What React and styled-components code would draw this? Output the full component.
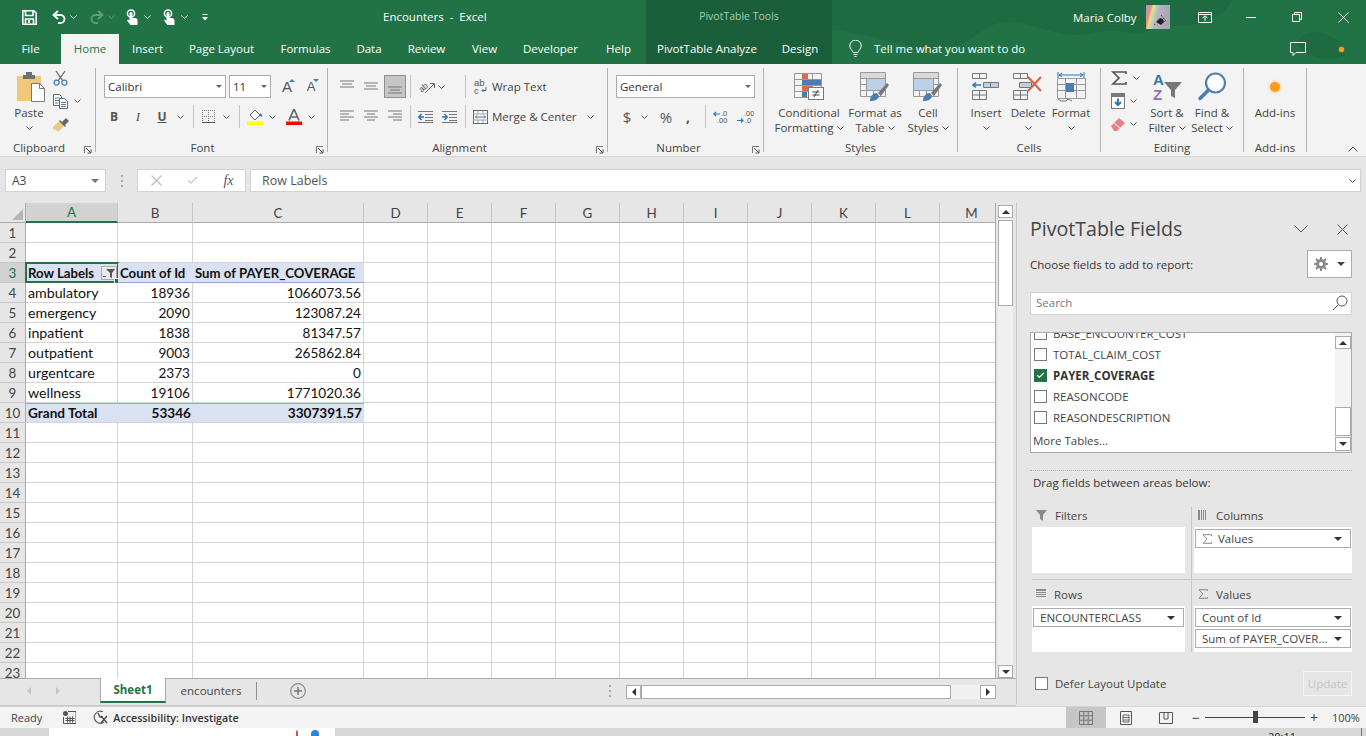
import React from 'react';
import styled, {createGlobalStyle} from 'styled-components';
import {Check} from 'lucide-react';

const uiFont = '"Open Sans", "Noto Sans", sans-serif';
const cellFont = 'Lato, "Liberation Sans", sans-serif';

const GlobalStyle = createGlobalStyle`
	html, body {
		margin: 0;
		padding: 0;
		background: #e6e6e6;
	}
	* {
		box-sizing: border-box;
	}
`;

const Page = styled.div`
	display: flex;
	flex-direction: column;
	width: 1366px;
	height: 736px;
	overflow: hidden;
	font-family: ${uiFont};
	font-size: 11.5px;
	color: #444;
	background: #e6e6e6;
`;

/* title bar and tabs */
const Header = styled.header`
	position: relative;
	flex: none;
	height: 64px;
	background: #217346;
	color: #fff;
`;

const HeaderArt = styled.svg`
	position: absolute;
	top: 0;
	left: 832px;
`;

const TitleRow = styled.div`
	position: relative;
	display: flex;
	height: 34px;
`;

const Qat = styled.div`
	display: flex;
	align-items: center;
	width: 383px;
	padding-left: 22px;
`;

const DocTitle = styled.div`
	width: 263px;
	line-height: 34px;
	white-space: pre;
`;

const ContextTitle = styled.div`
	width: 186px;
	background: #1b5e3a;
	color: #a3cdb5;
	font-size: 10.5px;
	line-height: 32px;
	text-align: center;
`;

const UserArea = styled.div`
	display: flex;
	flex: 1;
	align-items: center;
	padding-left: 241px;
`;

const Avatar = styled.svg`
	margin-left: 9px;
`;

const WindowButton = styled.div`
	display: flex;
	flex: none;
	align-items: center;
	justify-content: center;
	width: ${p => p.$w}px;
	margin-left: ${p => p.$ml || 0}px;
`;

const TabRow = styled.nav`
	position: relative;
	display: flex;
	height: 30px;
`;

const Tab = styled.div`
	display: flex;
	align-items: center;
	justify-content: center;
	width: ${p => p.$w}px;
	padding-bottom: 2px;
	background: ${p => (p.$active ? '#f3f3f3' : 'transparent')};
	color: ${p => (p.$active ? '#217346' : '#fff')};
	white-space: nowrap;
`;

const ContextTabs = styled.div`
	display: flex;
	width: 186px;
	background: #1b5e3a;
`;

const TellMe = styled.div`
	display: flex;
	align-items: center;
	gap: 12px;
	padding-bottom: 2px;
	padding-left: 17px;
`;

const Comment = styled.div`
	display: flex;
	align-items: center;
	gap: 33px;
	margin-left: 265px;
`;

const Dot = styled.span`
	display: block;
	width: ${p => p.$s}px;
	height: ${p => p.$s}px;
	border-radius: 50%;
	background: #ff9c1a;
	box-shadow: 0 0 ${p => p.$s / 3}px #ffb45c;
`;

/* ribbon */
const Ribbon = styled.section`
	position: relative;
	display: flex;
	flex: none;
	height: 92px;
	padding-top: 4px;
	background: #f3f3f3;
`;

const Group = styled.div`
	position: relative;
	display: flex;
	flex: none;
	flex-direction: column;
	width: ${p => p.$w}px;
	height: 84px;
	border-right: 1px solid #b1b1b1;
`;

const GroupBody = styled.div`
	display: flex;
	flex: none;
	height: 73px;
	padding-left: ${p => p.$pl || 0}px;
`;

const RowStack = styled.div`
	display: flex;
	flex-direction: column;
	gap: 7px;
	padding-top: 7px;
	padding-left: ${p => p.$pl || 0}px;
`;

const ToolRow = styled.div`
	display: flex;
	align-items: center;
	height: 23px;
`;

const GroupLabel = styled.div`
	flex: none;
	height: 14px;
	padding-right: ${p => p.$pr || 0}px;
	line-height: 14px;
	text-align: center;
	white-space: nowrap;
`;

const Launcher = styled.svg`
	position: absolute;
	right: 3px;
	bottom: -2px;
`;

const Slot = styled.div`
	position: relative;
	display: flex;
	flex: none;
	align-items: center;
	justify-content: center;
	width: ${p => p.$w}px;
	height: ${p => p.$h || 23}px;
	margin-left: ${p => p.$ml || 0}px;
	font-family: ${p => (p.$serif ? '"Liberation Serif", serif' : 'inherit')};
	font-size: ${p => p.$fs || 11.5}px;
	font-weight: ${p => (p.$bold ? 700 : 400)};
	font-style: ${p => (p.$italic ? 'italic' : 'normal')};
	text-decoration: ${p => (p.$underline ? 'underline' : 'none')};
	color: #555;
`;

const PressedSlot = styled(Slot)`
	border: 1px solid #8f8f8f;
	background: #c6c6c6;
`;

const GrowLetter = styled.span`
	font-family: "Liberation Sans", sans-serif;
	font-size: ${p => p.$fs}px;
	line-height: 16px;
	color: #555;
`;

const GrowCaret = styled.svg`
	position: absolute;
	top: 4px;
	right: 0;
`;

const VSep = styled.span`
	flex: none;
	width: 1px;
	height: 23px;
	margin-left: ${p => p.$ml}px;
	background: #c6c6c6;
`;

const Select = styled.div`
	display: flex;
	flex: none;
	align-items: center;
	justify-content: space-between;
	width: ${p => p.$w}px;
	height: 23px;
	margin-left: ${p => p.$ml || 0}px;
	padding: 0 3px 0 3px;
	border: 1px solid #ababab;
	background: #fff;
	color: #333;
`;

const ToolText = styled.span`
	flex: none;
	width: ${p => (p.$w ? `${p.$w}px` : 'auto')};
	margin-left: ${p => p.$ml || 0}px;
	white-space: nowrap;
`;

const LargeButton = styled.div`
	display: flex;
	flex: none;
	flex-direction: column;
	align-items: center;
	width: ${p => p.$w}px;
	line-height: 15px;
	white-space: nowrap;
`;

const LargeIcon = styled.div`
	display: flex;
	flex: none;
	align-items: center;
	justify-content: center;
	height: 37px;
	padding-left: ${p => p.$pl || 0}px;
`;

const LargeLine = styled.div`
	display: flex;
	align-items: center;
	justify-content: center;
	gap: 3px;
	height: 15px;
`;

const SmallStack = styled.div`
	display: flex;
	flex: none;
	flex-direction: column;
	gap: 7px;
	width: ${p => p.$w}px;
	padding-top: 2px;
	padding-left: ${p => p.$pl || 0}px;
`;

const SmallRow = styled.div`
	display: flex;
	align-items: center;
	gap: ${p => p.$gap || 5}px;
	height: 16px;
`;

const CollapseRibbon = styled.svg`
	position: absolute;
	right: 8px;
	bottom: 4px;
`;

/* formula bar */
const FormulaArea = styled.section`
	display: flex;
	flex: none;
	height: 47px;
	padding: 12px 5px 11px;
	border-top: 1px solid #d4d4d4;
`;

const NameBox = styled.div`
	display: flex;
	align-items: center;
	justify-content: space-between;
	width: 101px;
	padding: 0 6px;
	border: 1px solid #d2d2d2;
	background: #fff;
	font-size: 12px;
`;

const FormulaGrip = styled.div`
	display: flex;
	align-items: center;
	justify-content: center;
	width: 31px;
`;

const FxBox = styled.div`
	display: flex;
	align-items: center;
	width: 109px;
	border: 1px solid #d2d2d2;
	background: #fff;
`;

const FormulaInput = styled.div`
	display: flex;
	flex: 1;
	align-items: center;
	justify-content: space-between;
	margin-left: 4px;
	padding: 0 4px 0 11px;
	border: 1px solid #d2d2d2;
	background: #fff;
	font-size: 12.5px;
	color: #555;
`;

/* sheet */
const Main = styled.main`
	display: flex;
	flex: none;
	height: 503px;
`;

const SheetColumn = styled.div`
	display: flex;
	flex: none;
	flex-direction: column;
	width: 1016px;
`;

const SheetArea = styled.div`
	display: flex;
	flex: none;
	height: 475px;
`;

const Grid = styled.div`
	flex: none;
	width: 996px;
	height: 475px;
	overflow: hidden;
	border-right: 1px solid #ababab;
	background: #fff;
	font-family: ${cellFont};
	font-size: 13.4px;
	color: #111;
`;

const GridRow = styled.div`
	display: grid;
	grid-template-columns: 26px 92px 75px 171px repeat(9, 64px) 64px;
	height: ${p => p.$h}px;
`;

const ColHead = styled.div`
	display: flex;
	align-items: center;
	justify-content: center;
	border-right: 1px solid #c6c6c6;
	border-bottom: ${p => (p.$active ? '2px solid #217346' : '1px solid #ababab')};
	background: ${p => (p.$active ? '#d2d2d2' : '#e6e6e6')};
	color: ${p => (p.$active ? '#217346' : '#444')};
`;

const Corner = styled.div`
	display: flex;
	align-items: flex-end;
	justify-content: flex-end;
	padding: 0 2px 2px 0;
	border-right: 1px solid #ababab;
	border-bottom: 1px solid #ababab;
	background: #e6e6e6;
`;

const RowHead = styled.div`
	display: flex;
	align-items: center;
	justify-content: center;
	border-right: 1px solid #ababab;
	border-bottom: 1px solid #c6c6c6;
	background: ${p => (p.$active ? '#d2d2d2' : '#e6e6e6')};
	color: ${p => (p.$active ? '#217346' : '#444')};
`;

const cellSize = p => {
	if (p.$head) return 13.2;
	if (p.$pivot || p.$right) return 13.6;
	return 14.2;
};

const Cell = styled.div`
	position: relative;
	display: flex;
	align-items: center;
	justify-content: ${p => (p.$right ? 'flex-end' : 'flex-start')};
	padding: 0 2px 0 2px;
	border-right: ${p => (p.$pivot ? 'none' : '1px solid #d4d4d4')};
	border-top: ${p => (p.$total ? '1px solid #8ea9db' : 'none')};
	border-bottom: ${p => (p.$head ? '1px solid #8ea9db' : '1px solid #d4d4d4')};
	background: ${p => (p.$pivot ? '#d9e1f2' : '#fff')};
	font-weight: ${p => (p.$pivot ? 700 : 400)};
	font-size: ${cellSize}px;
	white-space: nowrap;
`;

const Selection = styled.div`
	position: absolute;
	top: -1px;
	right: -1px;
	bottom: -1px;
	left: -1px;
	border: 2px solid #217346;
`;

const FillHandle = styled.div`
	position: absolute;
	right: -3px;
	bottom: -3px;
	width: 5px;
	height: 5px;
	background: #217346;
	outline: 1px solid #fff;
`;

const FilterButton = styled.div`
	position: absolute;
	top: 3px;
	right: 1px;
	display: flex;
	align-items: center;
	justify-content: center;
	width: 16px;
	height: 14px;
	border: 1px solid #ababab;
	background: #e9e9e9;
`;

const VScroll = styled.div`
	display: flex;
	flex: 1;
	flex-direction: column;
	padding: 2px 3px 0 2px;
`;

const ScrollTrack = styled.div`
	display: flex;
	flex: 1;
	flex-direction: column;
	align-items: stretch;
	background: #f0f0f0;
`;

const ScrollButton = styled.div`
	display: flex;
	flex: none;
	align-items: center;
	justify-content: center;
	width: ${p => (p.$w ? `${p.$w}px` : 'auto')};
	height: ${p => p.$h || 13}px;
	border: 1px solid #ababab;
	background: #fff;
`;

const ScrollThumb = styled.div`
	flex: none;
	width: ${p => (p.$w ? `${p.$w}px` : 'auto')};
	height: ${p => (p.$h ? `${p.$h}px` : 'auto')};
	margin: ${p => p.$m || 0};
	border: 1px solid #ababab;
	background: #fff;
`;

const ScrollGap = styled.div`
	flex: 1;
`;

const SheetTabs = styled.div`
	display: flex;
	flex: none;
	height: 28px;
	border-top: 1px solid #ababab;
	border-bottom: 1px solid #c6c6c6;
`;

const TabNav = styled.div`
	display: flex;
	flex: none;
	align-items: center;
	gap: 21px;
	width: 100px;
	height: 24px;
	padding-left: 25px;
`;

const SheetTab = styled.div`
	display: flex;
	flex: none;
	align-items: center;
	justify-content: center;
	width: ${p => p.$w}px;
	height: 25px;
	margin-top: -1px;
	border-right: ${p => (p.$active ? '1px solid #ababab' : 'none')};
	border-left: ${p => (p.$active ? '1px solid #ababab' : 'none')};
	border-bottom: ${p => (p.$active ? '2px solid #217346' : 'none')};
	background: ${p => (p.$active ? '#fff' : 'transparent')};
	color: ${p => (p.$active ? '#217346' : '#444')};
	font-weight: ${p => (p.$active ? 700 : 400)};
`;

const TabDivider = styled.span`
	flex: none;
	width: 1px;
	height: 18px;
	margin-top: 3px;
	background: #8f8f8f;
`;

const AddSheet = styled.div`
	display: flex;
	flex: none;
	align-items: center;
	width: 46px;
	height: 24px;
	margin-left: 33px;
`;

const TabGrip = styled.div`
	display: flex;
	flex: none;
	align-items: center;
	width: 17px;
	height: 24px;
	margin-left: 273px;
`;

const HScroll = styled.div`
	display: flex;
	flex: none;
	width: 370px;
	height: 14px;
	margin-top: 6px;
	background: #f0f0f0;
`;

/* field list panel */
const Panel = styled.aside`
	display: flex;
	flex: 1;
	flex-direction: column;
	margin-bottom: 2px;
	padding: 0 15px 0 13px;
	border-left: 1px solid #c6c6c6;
`;

const PanelHead = styled.div`
	display: flex;
	align-items: center;
	height: 24px;
	margin-top: 14px;
`;

const PanelTitle = styled.div`
	width: 264px;
	font-size: 19.6px;
	line-height: 24px;
	color: #444;
	white-space: nowrap;
`;

const ChooseRow = styled.div`
	display: flex;
	align-items: center;
	justify-content: space-between;
	height: 28px;
	margin-top: 9px;
	color: #333;
`;

const GearButton = styled.div`
	display: flex;
	align-items: center;
	justify-content: center;
	gap: 9px;
	width: 45px;
	height: 28px;
	border: 1px solid #ababab;
	background: #fff;
`;

const SearchBox = styled.div`
	display: flex;
	align-items: center;
	justify-content: space-between;
	height: 23px;
	margin-top: 14px;
	padding: 0 3px 2px 5px;
	border: 1px solid #d2d2d2;
	background: #fff;
	color: #777;
`;

const FieldList = styled.div`
	display: flex;
	flex: none;
	height: 121px;
	margin-top: 17px;
	overflow: hidden;
	border: 1px solid #ababab;
	background: #fff;
`;

const FieldItems = styled.div`
	flex: 1;
	margin-top: -10px;
	padding-left: 3px;
	color: #444;
`;

const FieldRow = styled.div`
	display: flex;
	align-items: center;
	gap: 6px;
	height: 21px;
	font-weight: ${p => (p.$on ? 700 : 400)};
	color: ${p => (p.$on ? '#333' : '#444')};
`;

const Checkbox = styled.span`
	display: flex;
	flex: none;
	align-items: center;
	justify-content: center;
	width: 13px;
	height: 13px;
	border: 1px solid ${p => (p.$on ? '#217346' : '#777')};
	background: ${p => (p.$on ? '#217346' : '#fff')};
`;

const MoreTables = styled.div`
	height: 18px;
	margin-top: 4px;
	margin-left: -1px;
	line-height: 18px;
`;

const ListScroll = styled.div`
	display: flex;
	flex: none;
	flex-direction: column;
	width: 16px;
	padding: 3px 0 1px;
	background: #f3f3f3;
`;

const DottedLine = styled.div`
	height: 1px;
	margin-top: 17px;
	border-top: 1px dotted #b1b1b1;
`;

const DragHint = styled.div`
	margin: 5px 0 0 3px;
	line-height: 14px;
	color: #333;
`;

const Areas = styled.div`
	display: grid;
	grid-template-columns: 160px 160px;
	margin: 17px 0 0 2px;
`;

const Area = styled.div`
	display: flex;
	flex-direction: column;
	height: ${p => (p.$top ? 73 : 72)}px;
	padding-top: ${p => (p.$top ? 0 : 6)}px;
	padding-left: ${p => (p.$right ? 2 : 0)}px;
	padding-right: ${p => (p.$right ? 0 : 6)}px;
	border-right: ${p => (p.$right ? 'none' : '1px solid #c6c6c6')};
	border-bottom: ${p => (p.$top ? '1px solid #c6c6c6' : 'none')};
`;

const AreaHead = styled.div`
	display: flex;
	flex: none;
	align-items: center;
	gap: 8px;
	height: 17px;
	padding-left: 4px;
	padding-bottom: 1px;
	color: #444;
`;

const DropBox = styled.div`
	display: flex;
	flex: none;
	flex-direction: column;
	gap: 2px;
	height: 46px;
	margin-top: 3px;
	padding: 2px 1px;
	background: #fff;
`;

const AreaItem = styled.div`
	display: flex;
	flex: none;
	align-items: center;
	justify-content: space-between;
	height: 19px;
	padding: 0 8px 0 6px;
	border: 1px solid #ababab;
	background: #fff;
	white-space: nowrap;
`;

const ItemLabel = styled.span`
	display: flex;
	align-items: center;
	gap: 6px;
	color: #444;
`;

const DeferRow = styled.div`
	display: flex;
	align-items: center;
	gap: 7px;
	height: 25px;
	margin-top: 19px;
	padding-left: 5px;
`;

const UpdateButton = styled.div`
	display: flex;
	align-items: center;
	justify-content: center;
	width: 49px;
	height: 25px;
	margin-left: auto;
	border: 1px solid #f6f6f6;
	color: #c3c3c3;
`;

/* status bar */
const StatusBar = styled.footer`
	display: flex;
	flex: none;
	align-items: center;
	height: 22px;
	background: #f3f3f3;
	border-top: 1px solid #d4d4d4;
`;

const StatusText = styled.span`
	flex: none;
	margin-left: ${p => p.$ml || 0}px;
	font-weight: ${p => (p.$bold ? 600 : 400)};
	font-size: ${p => p.$fs || 11}px;
	color: ${p => (p.$bold ? '#333' : '#444')};
	white-space: nowrap;
`;

const StatusRight = styled.div`
	display: flex;
	flex: none;
	align-items: center;
	width: 300px;
	height: 21px;
	margin-left: auto;
`;

const ViewButton = styled.div`
	display: flex;
	flex: none;
	align-items: center;
	justify-content: center;
	width: 40px;
	height: 21px;
	background: ${p => (p.$active ? '#c6c6c6' : 'transparent')};
`;

const ZoomMark = styled.span`
	display: block;
	flex: none;
	width: ${p => p.$w}px;
	margin-left: ${p => p.$ml}px;
	font-size: 14px;
	line-height: 14px;
	text-align: center;
	color: #444;
`;

const ZoomSlider = styled.div`
	position: relative;
	flex: none;
	width: 100px;
	height: 1px;
	margin-left: 6px;
	background: #444;
`;

const ZoomThumb = styled.span`
	position: absolute;
	top: -6px;
	left: 48px;
	width: 5px;
	height: 12px;
	background: #444;
`;

const DesktopStrip = styled.div`
	position: relative;
	display: flex;
	flex: 1;
	overflow: hidden;
	background: #d8d8d8;
`;

const BehindWindow = styled.div`
	display: flex;
	gap: 13px;
	justify-content: flex-end;
	width: 286px;
	margin-left: 49px;
	padding: 2px 16px 0 0;
	background: #fff;
`;

const BehindMark = styled.span`
	display: block;
	width: ${p => p.$w}px;
	height: 8px;
	border-radius: 50% 50% 0 0;
	background: ${p => p.$color};
`;

const BehindClock = styled.div`
	position: absolute;
	top: 2px;
	left: 1268px;
	font-size: 11px;
	line-height: 14px;
	color: #222;
`;

const BehindEdge = styled.div`
	position: absolute;
	top: 0;
	left: 1361px;
	width: 1px;
	height: 8px;
	background: #777;
`;

/* small drawings */
const Svg = ({w, h, children, ...rest}) => (
	<svg width={w} height={h} viewBox={`0 0 ${w} ${h}`} fill="none" {...rest}>
		{children}
	</svg>
);

const Chev = ({color = '#555'}) => (
	<Svg w={7} h={4}>
		<path d="M.5.5l3 3 3-3" stroke={color} />
	</Svg>
);

const Caret = ({color = '#555'}) => (
	<Svg w={8} h={4}>
		<path d="M0 0h8L4 4z" fill={color} />
	</Svg>
);

const SelectCaret = () => (
	<Svg w={6} h={3}>
		<path d="M0 0h6L3 3z" fill="#666" />
	</Svg>
);

const Arrow = ({dir = 'up', color = '#333'}) => (
	<Svg w={8} h={8}>
		<path
			d={
				{
					up: 'M0 6h8L4 2z',
					down: 'M0 2h8L4 6z',
					left: 'M6 0v8L2 4z',
					right: 'M2 0v8l4-4z',
				}[dir]
			}
			fill={color}
		/>
	</Svg>
);

const CrossIcon = ({s = 11, color = '#fff', width = 1}) => (
	<Svg w={s} h={s}>
		<path d={`M.5.5l${s - 1} ${s - 1}M${s - 0.5} .5l-${s - 1} ${s - 1}`} stroke={color} strokeWidth={width} />
	</Svg>
);

const LauncherIcon = () => (
	<Launcher width="8" height="8" viewBox="0 0 8 8" fill="none">
		<path d="M.5 7V.5H7" stroke="#777" />
		<path d="M2 2l5 5M7 3.500V7H3.500" stroke="#555" />
	</Launcher>
);

const SaveIcon = () => (
	<Svg w={15} h={15}>
		<path d="M.8.8h11l2.400 2.400v11H.8z" stroke="#fff" strokeWidth="1.600" />
		<path d="M3.500 1v4.500h7.500V1M3.500 14V9h8v5" stroke="#fff" strokeWidth="1.600" />
		<path d="M7 10v3" stroke="#fff" strokeWidth="2" />
	</Svg>
);

const UndoIcon = ({color = '#fff', flip}) => (
	<Svg w={14} h={14} style={flip ? {transform: 'scaleX(-1)'} : undefined}>
		<path d="M6 1L1.500 5 6 9" stroke={color} strokeWidth="1.800" />
		<path d="M2 5h6.500a4 4 0 010 8H6" stroke={color} strokeWidth="1.800" />
	</Svg>
);

const TouchIcon = () => (
	<Svg w={12} h={17}>
		<circle cx="5" cy="4.500" r="3.600" stroke="#fff" strokeWidth="1.500" />
		<path
			d="M3.500 4.500a1.500 1.500 0 013 0V9H9c1.600 0 2.500 1 2.500 2.300V16H4.500L1 11.500l1-1 1.500 1z"
			fill="#fff"
		/>
	</Svg>
);

const QatMore = () => (
	<Svg w={6} h={7}>
		<path d="M.5.5h5" stroke="#fff" />
		<path d="M0 3h6L3 6.500z" fill="#fff" />
	</Svg>
);

const PasteIcon = () => (
	<Svg w={28} h={30}>
		<rect x="0" y="4" width="24" height="25" rx="1" fill="#edc87e" />
		<path d="M6 3h3V0h6v3h3v4H6z" fill="#6f6f6f" />
		<path d="M14.500 11.500h8l5 5v13h-13z" fill="#fff" stroke="#777" />
		<path d="M22.500 11.500v5h5" stroke="#777" />
	</Svg>
);

const CutIcon = () => (
	<Svg w={15} h={16}>
		<path d="M3 1l7 10M12 1L5 11" stroke="#666" strokeWidth="1.300" />
		<circle cx="3.600" cy="12.600" r="2.500" stroke="#4a7eb3" strokeWidth="1.300" />
		<circle cx="11.400" cy="12.600" r="2.500" stroke="#4a7eb3" strokeWidth="1.300" />
	</Svg>
);

const CopyIcon = () => (
	<Svg w={15} h={15}>
		<path d="M.5.5h6l2 2v9h-8z" fill="#fff" stroke="#666" />
		<path d="M6.500 4.500h5l3 3v7h-8z" fill="#fff" stroke="#666" />
		<path d="M2 4h4M2 6.500h4M2 9h3M8 8.500h5M8 10.500h5M8 12.500h5" stroke="#4a7eb3" />
	</Svg>
);

const PainterIcon = () => (
	<Svg w={17} h={15}>
		<path d="M0 10l6-6 5 5-4 4-2 2-1-2-1 1-1-2-2 1z" fill="#edc87e" />
		<path d="M7 3l2 2 4-4 3 3-4 4 1 1-1 1-6-6z" fill="#666" />
	</Svg>
);

const GrowIcon = ({up}) => (
	<Slot $w={16} $ml={8}>
		<GrowLetter $fs={up ? 15 : 13}>A</GrowLetter>
		<GrowCaret width="6" height="3" viewBox="0 0 6 3">
			<path d={up ? 'M0 3h6L3 0z' : 'M0 0h6L3 3z'} fill="#4a7eb3" />
		</GrowCaret>
	</Slot>
);

const BorderIcon = () => (
	<Svg w={13} h={13}>
		<path
			d="M.5 0v13M6.500 0v13M12.500 0v13M0 .5h13M0 6.500h13"
			stroke="#777"
			strokeDasharray="1 1"
		/>
		<path d="M0 12.500h13" stroke="#555" />
	</Svg>
);

const FillIcon = () => (
	<Svg w={16} h={16}>
		<path d="M3 6l5-5 5 5-5 5z" fill="#fff" stroke="#666" />
		<path d="M13 4c2 1 2.500 2.500 2 4l-2-1z" fill="#4a7eb3" />
		<rect y="12.500" width="16" height="3.500" fill="#ffff00" />
	</Svg>
);

const ColorIcon = () => (
	<Svg w={16} h={16}>
		<path d="M3 11.500L8 0l5 11.500M4.800 8h6.400" stroke="#666" strokeWidth="1.700" />
		<rect y="12.500" width="16" height="3.500" fill="#ff0000" />
	</Svg>
);

const lines = {
	top: ['M0 1h14', 'M2 4h10', 'M0 7h14'],
	middle: ['M0 3h14', 'M2 6h10', 'M0 9h14'],
	bottom: ['M0 7h14', 'M2 10h10', 'M0 13h14'],
	left: ['M0 1h14', 'M0 4h9', 'M0 7h14', 'M0 10h9'],
	center: ['M0 1h14', 'M3 4h8', 'M0 7h14', 'M3 10h8'],
	right: ['M0 1h14', 'M5 4h9', 'M0 7h14', 'M5 10h9'],
};

const AlignIcon = ({kind}) => (
	<Svg w={14} h={14}>
		{lines[kind].map(d => (
			<path key={d} d={d} stroke="#777" />
		))}
	</Svg>
);

const OrientIcon = () => (
	<Svg w={17} h={15} overflow="visible">
		<text
			x="1"
			y="11"
			fontSize="8.500"
			fill="#555"
			fontFamily="Liberation Sans, sans-serif"
			transform="rotate(-40 6 9)"
		>
			ab
		</text>
		<path d="M7 14l9-9M12 4.500h4.500V9" stroke="#666" />
	</Svg>
);

const IndentIcon = ({out}) => (
	<Svg w={15} h={12}>
		<path d="M0 .5h15M7 3.500h8M7 6.500h8M7 9.500h8M0 11.500h15" stroke="#777" />
		<path
			d={out ? 'M6 6H1M3.500 3L.8 6l2.700 3' : 'M0 6h5M2.500 3l2.700 3-2.700 3'}
			stroke="#2f75b5"
			strokeWidth="1.500"
		/>
	</Svg>
);

const WrapIcon = () => (
	<Svg w={13} h={17}>
		<text x="0" y="7.500" fontSize="9.500" fill="#555" fontFamily="Liberation Sans, sans-serif">
			ab
		</text>
		<text x="0" y="16" fontSize="9.500" fill="#555" fontFamily="Liberation Sans, sans-serif">
			c
		</text>
		<path d="M12 9v3.500H8M9.500 11L8 12.500 9.500 14" stroke="#2f75b5" />
	</Svg>
);

const MergeIcon = () => (
	<Svg w={15} h={14}>
		<rect x=".5" y=".5" width="14" height="13" fill="#fff" stroke="#666" />
		<path d="M0 4h15M0 10h15" stroke="#999" />
		<path d="M5 .5v3M10 .5v3M5 10v3M10 10v3" stroke="#999" />
		<path d="M2.500 7h10M4 5.500L2.500 7 4 8.500M11 5.500L12.500 7 11 8.500" stroke="#2f75b5" />
	</Svg>
);

const DecimalIcon = ({more}) => (
	<Svg w={17} h={14}>
		<text x={more ? 8 : 7} y="6" fontSize="7.500" fill="#555" fontFamily="Liberation Sans, sans-serif">
			{more ? '.0' : '.00'}
		</text>
		<text x={more ? 4 : 8} y="13" fontSize="7.500" fill="#555" fontFamily="Liberation Sans, sans-serif">
			{more ? '.00' : '.0'}
		</text>
		<path
			d={more ? 'M1 4h6M3 2L1 4l2 2' : 'M0 10.500h6M4 8.500l2 2-2 2'}
			stroke="#2f75b5"
			strokeWidth="1.200"
		/>
	</Svg>
);

const ConditionalIcon = () => (
	<Svg w={30} h={27}>
		<path d="M.5.5h27v24H.5zM.5 6.500h27M.5 12.500h27M.5 18.500h27M8.500 0v25M18.500 0v25" stroke="#999" />
		<rect x="8" y="1" width="6" height="5" fill="#dc6a48" />
		<rect x="8" y="7" width="19" height="5" fill="#4a7eb3" />
		<rect x="8" y="13" width="10" height="5" fill="#dc6a48" />
		<rect x="8" y="19" width="5" height="5" fill="#4a7eb3" />
		<rect x="14.500" y="14.500" width="15" height="12" fill="#fff" stroke="#777" />
		<path d="M18.500 19h7M18.500 22h7M24 17l-4 7" stroke="#444" />
	</Svg>
);

const TableStyleIcon = ({wide}) => (
	<Svg w={30} h={30}>
		<path d="M.5.5h25v24H.5zM.5 6.500h25M.5 12.500h25M.5 18.500h25M6.500 0v25M13.500 0v25M20.500 0v25" stroke="#999" />
		<rect x="1" y="1" width="24" height="5" fill="#d9d9d9" />
		<rect x={wide ? 1 : 7} y="7" width={wide ? 19 : 18} height="11" fill="#bcd0e8" />
		<path d="M10 29c0-5 3-8 7-8l2 3c-1 4-4 5-9 5z" fill="#4a7eb3" />
		<path d="M18 21l9-10 2 2-8 11z" fill="#777" />
	</Svg>
);

const InsertIcon = () => (
	<Svg w={28} h={27}>
		<path d="M.5.5h14v5H.5zM7.500 0v6M.5 17.500h14v9H.5zM7.500 17v10M0 22h15" stroke="#777" />
		<path d="M11.500 9.500h15v5h-15zM18.500 9v6" stroke="#777" fill="#bcd0e8" />
		<path d="M1 12h8M4 9.500L1 12l3 2.500" stroke="#2f75b5" strokeWidth="1.500" />
	</Svg>
);

const DeleteIcon = () => (
	<Svg w={30} h={27}>
		<path d="M.5.500h14v5H.5zM7.500 0v6M.5 17.500h14v9H.5zM7.500 17v10M0 22h15" stroke="#777" />
		<path d="M6.500 9.500h12v5h-12z" stroke="#777" fill="#bcd0e8" />
		<path d="M15 4l13 14M28 4L15 18" stroke="#d9603d" strokeWidth="2" />
	</Svg>
);

const FormatIcon = () => (
	<Svg w={29} h={30}>
		<path d="M1 0v6M27 0v6M2 3h24M5 1L2 3l3 2M23 1l3 2-3 2" stroke="#2f75b5" />
		<path d="M.5 6.500h28v20H.5zM.5 12.500h28M.5 18.500h28M8.500 6v21M19.500 6v21" stroke="#999" />
		<rect x="9" y="11" width="8" height="9" fill="#4a7eb3" />
		<path d="M1 27l3 2h5l2-2 4 2" stroke="#777" />
	</Svg>
);

const SigmaIcon = () => (
	<Svg w={16} h={14}>
		<path d="M15 3V1H2l6 6-6 6h13v-2" stroke="#555" strokeWidth="1.700" />
	</Svg>
);

const FillDownIcon = () => (
	<Svg w={14} h={16}>
		<rect x=".5" y=".5" width="13" height="15" fill="#fff" stroke="#777" />
		<rect width="14" height="4" fill="#777" />
		<path d="M7 5.500V12M4 9l3 3 3-3" stroke="#2f75b5" strokeWidth="2" />
	</Svg>
);

const EraserIcon = () => (
	<Svg w={14} h={13}>
		<path d="M0 8l8-8 6 5-8 8H3z" fill="#e8808a" />
		<path d="M3 5l6 5" stroke="#f3f3f3" />
	</Svg>
);

const SortIcon = () => (
	<Svg w={30} h={30}>
		<text x="1" y="13" fontSize="15" fontWeight="700" fill="#2f75b5" fontFamily="Liberation Sans, sans-serif">
			A
		</text>
		<text x="1" y="28" fontSize="15" fontWeight="700" fill="#9a6cc0" fontFamily="Liberation Sans, sans-serif">
			Z
		</text>
		<path d="M12 10h18l-7 8v8l-4-2v-6z" fill="#777" />
	</Svg>
);

const FindIcon = () => (
	<Svg w={29} h={29}>
		<circle cx="17.500" cy="11" r="9.500" stroke="#4a7eb3" strokeWidth="2.200" fill="#fff" />
		<path d="M10.500 18L2 26.500" stroke="#4a7eb3" strokeWidth="3.500" strokeLinecap="round" />
	</Svg>
);

const GearIcon = () => (
	<Svg w={14} h={14}>
		<circle cx="7" cy="7" r="3.500" stroke="#8a8a8a" strokeWidth="3" />
		<path d="M7 0v3M7 11v3M0 7h3M11 7h3M2 2l2 2M10 10l2 2M2 12l2-2M10 4l2-2" stroke="#8a8a8a" strokeWidth="2" />
	</Svg>
);

const SearchIcon = () => (
	<Svg w={16} h={16}>
		<circle cx="10" cy="6" r="5" stroke="#555" />
		<path d="M6.500 9.500L1 15" stroke="#555" />
	</Svg>
);

const FilterGlyph = () => (
	<Svg w={11} h={11}>
		<path d="M0 0h11L7 5v6L4 9V5z" fill="#8a8a8a" />
	</Svg>
);

const ColumnsGlyph = () => (
	<Svg w={10} h={10}>
		<path d="M.5 0v10M1.500 0v10M3.500 0v10M5.500 0v10M7.500 0v10" stroke="#8a8a8a" />
	</Svg>
);

const RowsGlyph = () => (
	<Svg w={10} h={10}>
		<path d="M0 .5h10M0 1.500h10M0 3.500h10M0 5.500h10M0 7.500h10" stroke="#8a8a8a" />
	</Svg>
);

const SigmaGlyph = () => (
	<Svg w={10} h={10}>
		<path d="M9.500 2V.7H1L5 5 1 9.300h8.500V8" stroke="#8a8a8a" />
	</Svg>
);

const columns = ['A', 'B', 'C', 'D', 'E', 'F', 'G', 'H', 'I', 'J', 'K', 'L', 'M'];

const pivot = {
	3: ['Row Labels', 'Count of Id', 'Sum of PAYER_COVERAGE'],
	4: ['ambulatory', '18936', '1066073.56'],
	5: ['emergency', '2090', '123087.24'],
	6: ['inpatient', '1838', '81347.57'],
	7: ['outpatient', '9003', '265862.84'],
	8: ['urgentcare', '2373', '0'],
	9: ['wellness', '19106', '1771020.36'],
	10: ['Grand Total', '53346', '3307391.57'],
};

const rowNumbers = Array.from({length: 23}, (_, i) => i + 1);

const tabs = [
	['File', 61],
	['Home', 58],
	['Insert', 57],
	['Page Layout', 91],
	['Formulas', 77],
	['Data', 50],
	['Review', 65],
	['View', 51],
	['Developer', 81],
	['Help', 55],
];

function SheetRow({n}) {
	const values = pivot[n];
	const isHead = n === 3;
	const isTotal = n === 10;
	return (
		<GridRow $h={20}>
			<RowHead $active={isHead}>{n}</RowHead>
			{columns.map((col, i) => {
				const value = values && i < 3 ? values[i] : '';
				const inPivot = (isHead || isTotal) && i < 3;
				return (
					<Cell
						key={col}
						$pivot={inPivot}
						$head={isHead && i < 3}
						$total={isTotal && i < 3}
						$right={values && !isHead && i > 0 && i < 3}
					>
						{value}
						{isHead && i === 0 && (
							<>
								<FilterButton>
									<Svg w={12} h={9}>
										<path d="M0 7.500h3" stroke="#555" />
										<path d="M3 0h9L9 4v5L7 8V4z" fill="#555" />
									</Svg>
								</FilterButton>
								<Selection>
									<FillHandle />
								</Selection>
							</>
						)}
					</Cell>
				);
			})}
		</GridRow>
	);
}

function SheetGrid() {
	return (
		<Grid>
			<GridRow $h={20}>
				<Corner>
					<Svg w={11} h={11}>
						<path d="M11 0v11H0z" fill="#b5b5b5" />
					</Svg>
				</Corner>
				{columns.map(col => (
					<ColHead key={col} $active={col === 'A'}>
						{col}
					</ColHead>
				))}
			</GridRow>
			{rowNumbers.map(n => (
				<SheetRow key={n} n={n} />
			))}
		</Grid>
	);
}

function AreaEntry({label, sigma}) {
	return (
		<AreaItem>
			<ItemLabel>
				{sigma && <SigmaGlyph />}
				{label}
			</ItemLabel>
			<Caret color="#333" />
		</AreaItem>
	);
}

function FieldPanel() {
	return (
		<Panel>
			<PanelHead>
				<PanelTitle>PivotTable Fields</PanelTitle>
				<Svg w={14} h={8}>
					<path d="M.5.5L7 7l6.500-6.500" stroke="#555" />
				</Svg>
				<WindowButton $w={12} $ml={28}>
					<CrossIcon s={11} color="#555" />
				</WindowButton>
			</PanelHead>
			<ChooseRow>
				Choose fields to add to report:
				<GearButton>
					<GearIcon />
					<Caret color="#444" />
				</GearButton>
			</ChooseRow>
			<SearchBox>
				Search
				<SearchIcon />
			</SearchBox>
			<FieldList>
				<FieldItems>
					<FieldRow>
						<Checkbox />
						BASE_ENCOUNTER_COST
					</FieldRow>
					<FieldRow>
						<Checkbox />
						TOTAL_CLAIM_COST
					</FieldRow>
					<FieldRow $on>
						<Checkbox $on>
							<Check size={9} strokeWidth={3} color="#fff" />
						</Checkbox>
						PAYER_COVERAGE
					</FieldRow>
					<FieldRow>
						<Checkbox />
						REASONCODE
					</FieldRow>
					<FieldRow>
						<Checkbox />
						REASONDESCRIPTION
					</FieldRow>
					<MoreTables>More Tables...</MoreTables>
				</FieldItems>
				<ListScroll>
					<ScrollButton>
						<Arrow dir="up" />
					</ScrollButton>
					<ScrollGap />
					<ScrollThumb $h={29} $m="0 0 1px" />
					<ScrollButton $h={14}>
						<Arrow dir="down" />
					</ScrollButton>
				</ListScroll>
			</FieldList>
			<DottedLine />
			<DragHint>Drag fields between areas below:</DragHint>
			<Areas>
				<Area $top>
					<AreaHead>
						<FilterGlyph />
						Filters
					</AreaHead>
					<DropBox />
				</Area>
				<Area $top $right>
					<AreaHead>
						<ColumnsGlyph />
						Columns
					</AreaHead>
					<DropBox>
						<AreaEntry label="Values" sigma />
					</DropBox>
				</Area>
				<Area>
					<AreaHead>
						<RowsGlyph />
						Rows
					</AreaHead>
					<DropBox>
						<AreaEntry label="ENCOUNTERCLASS" />
					</DropBox>
				</Area>
				<Area $right>
					<AreaHead>
						<SigmaGlyph />
						Values
					</AreaHead>
					<DropBox>
						<AreaEntry label="Count of Id" />
						<AreaEntry label="Sum of PAYER_COVER..." />
					</DropBox>
				</Area>
			</Areas>
			<DeferRow>
				<Checkbox />
				Defer Layout Update
				<UpdateButton>Update</UpdateButton>
			</DeferRow>
		</Panel>
	);
}

export default function App() {
	return (
		<Page>
			<GlobalStyle />
			<Header>
				<HeaderArt width="534" height="64" viewBox="0 0 534 64">
					<path
						d="M0 0h400c-8 18-28 26-60 26-20 0-24 10-48 6-26-4-36 6-60 2-24-4-30-10-56-12-24-2-40 30-74 28C70 48 44 34 0 30z"
						fill="#1f6b41"
					/>
					<path d="M465 44c2-12 24-16 36-6 10 2 14 10 12 18-16 6-40 2-48-12z" fill="#1f6b41" />
				</HeaderArt>
				<TitleRow>
					<Qat>
						<SaveIcon />
						<Slot $w={14} $h={14} $ml={15}>
							<UndoIcon />
						</Slot>
						<Slot $w={8} $h={14} $ml={3}>
							<Chev color="#fff" />
						</Slot>
						<Slot $w={14} $h={14} $ml={13}>
							<UndoIcon color="#5f9e7c" flip />
						</Slot>
						<Slot $w={8} $h={14} $ml={3}>
							<Chev color="#5f9e7c" />
						</Slot>
						<Slot $w={12} $h={17} $ml={11}>
							<TouchIcon />
						</Slot>
						<Slot $w={8} $h={14} $ml={5}>
							<Chev color="#fff" />
						</Slot>
						<Slot $w={12} $h={17} $ml={12}>
							<TouchIcon />
						</Slot>
						<Slot $w={8} $h={14} $ml={5}>
							<Chev color="#fff" />
						</Slot>
						<Slot $w={6} $h={14} $ml={14}>
							<QatMore />
						</Slot>
					</Qat>
					<DocTitle>Encounters  -  Excel</DocTitle>
					<ContextTitle>PivotTable Tools</ContextTitle>
					<UserArea>
						Maria Colby
						<Avatar width="24" height="24" viewBox="0 0 24 24">
							<defs>
								<linearGradient id="rainbow" x1="0" y1="0" x2="1" y2="0.25">
									<stop offset="0.05" stopColor="#a59fb0" />
									<stop offset="0.2" stopColor="#e88a8a" />
									<stop offset="0.3" stopColor="#f0dc80" />
									<stop offset="0.4" stopColor="#b8d8b0" />
									<stop offset="0.55" stopColor="#b6b2c4" />
									<stop offset="1" stopColor="#a8a6b4" />
								</linearGradient>
							</defs>
							<rect width="24" height="24" fill="url(#rainbow)" />
							<path d="M10 17l4-4 3 1 1 3-3 3z" fill="#222" />
							<path d="M8 19l2 1M15 10l4 5M18 17l2-2" stroke="#222" strokeDasharray="1 1" />
						</Avatar>
						<WindowButton $w={14} $ml={28}>
							<Svg w={14} h={11}>
								<path d="M.5.5h13v10H.5zM0 2.500h14" stroke="#fff" />
								<path d="M7 9V4M4.500 6L7 3.800 9.500 6" stroke="#fff" />
							</Svg>
						</WindowButton>
						<WindowButton $w={10} $ml={34}>
							<Svg w={10} h={1}>
								<path d="M0 .5h10" stroke="#fff" />
							</Svg>
						</WindowButton>
						<WindowButton $w={10} $ml={36}>
							<Svg w={10} h={10}>
								<path d="M.5 2.500h7v7h-7zM2.500 2.500V.5h7v7h-2" stroke="#fff" />
							</Svg>
						</WindowButton>
						<WindowButton $w={11} $ml={36}>
							<CrossIcon s={11} color="#fff" />
						</WindowButton>
					</UserArea>
				</TitleRow>
				<TabRow>
					{tabs.map(([label, w]) => (
						<Tab key={label} $w={w} $active={label === 'Home'}>
							{label}
						</Tab>
					))}
					<ContextTabs>
						<Tab $w={122}>PivotTable Analyze</Tab>
						<Tab $w={64}>Design</Tab>
					</ContextTabs>
					<TellMe>
						<Svg w={13} h={17}>
							<path
								d="M4 12.500C3.500 10 .8 9 .8 5.800a5.700 5.700 0 0111.400 0C12.200 9 9.500 10 9 12.500zM4.500 14.500h4M5.500 16.500h2"
								stroke="#fff"
							/>
						</Svg>
						Tell me what you want to do
					</TellMe>
					<Comment>
						<Svg w={16} h={14}>
							<path d="M.5.5h15v10H6l-3 3v-3H.5z" stroke="#fff" />
						</Svg>
						<Dot $s={5} />
					</Comment>
				</TabRow>
			</Header>

			<Ribbon>
				<Group $w={96}>
					<GroupBody $pl={9}>
						<LargeButton $w={40}>
							<LargeIcon $pl={4}>
								<PasteIcon />
							</LargeIcon>
							<LargeLine>Paste</LargeLine>
							<LargeLine>
								<Chev />
							</LargeLine>
						</LargeButton>
						<SmallStack $w={40} $pl={4}>
							<SmallRow>
								<CutIcon />
							</SmallRow>
							<SmallRow $gap={6}>
								<CopyIcon />
								<Chev />
							</SmallRow>
							<SmallRow>
								<PainterIcon />
							</SmallRow>
						</SmallStack>
					</GroupBody>
					<GroupLabel $pr={17}>Clipboard</GroupLabel>
					<LauncherIcon />
				</Group>

				<Group $w={232}>
					<GroupBody>
						<RowStack $pl={8}>
							<ToolRow>
								<Select $w={122}>
									Calibri
									<SelectCaret />
								</Select>
								<Select $w={42} $ml={3}>
									11
									<SelectCaret />
								</Select>
								<GrowIcon up />
								<GrowIcon />
							</ToolRow>
							<ToolRow>
								<Slot $w={20} $bold $fs={12}>
									B
								</Slot>
								<Slot $w={20} $ml={4} $italic $serif $fs={13}>
									I
								</Slot>
								<Slot $w={20} $ml={4} $bold $underline $fs={12}>
									U
								</Slot>
								<Slot $w={8} $ml={4}>
									<Chev />
								</Slot>
								<VSep $ml={9} />
								<Slot $w={13} $ml={8}>
									<BorderIcon />
								</Slot>
								<Slot $w={8} $ml={7}>
									<Chev />
								</Slot>
								<VSep $ml={9} />
								<Slot $w={16} $ml={7}>
									<FillIcon />
								</Slot>
								<Slot $w={8} $ml={5}>
									<Chev />
								</Slot>
								<Slot $w={16} $ml={10}>
									<ColorIcon />
								</Slot>
								<Slot $w={8} $ml={5}>
									<Chev />
								</Slot>
							</ToolRow>
						</RowStack>
					</GroupBody>
					<GroupLabel $pr={18}>Font</GroupLabel>
					<LauncherIcon />
				</Group>

				<Group $w={280}>
					<GroupBody>
						<RowStack $pl={12}>
							<ToolRow>
								<Slot $w={14}>
									<AlignIcon kind="top" />
								</Slot>
								<Slot $w={14} $ml={10}>
									<AlignIcon kind="middle" />
								</Slot>
								<PressedSlot $w={22} $ml={6}>
									<AlignIcon kind="bottom" />
								</PressedSlot>
								<VSep $ml={4} />
								<Slot $w={17} $ml={7}>
									<OrientIcon />
								</Slot>
								<Slot $w={8} $ml={2}>
									<Chev />
								</Slot>
								<VSep $ml={20} />
								<Slot $w={13} $ml={8}>
									<WrapIcon />
								</Slot>
								<ToolText $ml={5}>Wrap Text</ToolText>
							</ToolRow>
							<ToolRow>
								<Slot $w={14}>
									<AlignIcon kind="left" />
								</Slot>
								<Slot $w={14} $ml={10}>
									<AlignIcon kind="center" />
								</Slot>
								<Slot $w={14} $ml={10}>
									<AlignIcon kind="right" />
								</Slot>
								<VSep $ml={8} />
								<Slot $w={15} $ml={7}>
									<IndentIcon out />
								</Slot>
								<Slot $w={15} $ml={9}>
									<IndentIcon />
								</Slot>
								<VSep $ml={8} />
								<Slot $w={15} $ml={7}>
									<MergeIcon />
								</Slot>
								<ToolText $w={90} $ml={4}>
									Merge &amp; Center
								</ToolText>
								<Slot $w={8} $ml={4}>
									<Chev />
								</Slot>
							</ToolRow>
						</RowStack>
					</GroupBody>
					<GroupLabel $pr={16}>Alignment</GroupLabel>
					<LauncherIcon />
				</Group>

				<Group $w={156}>
					<GroupBody>
						<RowStack $pl={8}>
							<ToolRow>
								<Select $w={139}>
									General
									<SelectCaret />
								</Select>
							</ToolRow>
							<ToolRow>
								<Slot $w={12} $ml={5} $fs={15}>
									$
								</Slot>
								<Slot $w={8} $ml={7}>
									<Chev />
								</Slot>
								<Slot $w={16} $ml={10} $fs={15}>
									%
								</Slot>
								<Slot $w={10} $h={18} $ml={9} $bold $fs={14}>
									,
								</Slot>
								<VSep $ml={12} />
								<Slot $w={17} $ml={7}>
									<DecimalIcon more />
								</Slot>
								<Slot $w={17} $ml={7}>
									<DecimalIcon />
								</Slot>
							</ToolRow>
						</RowStack>
					</GroupBody>
					<GroupLabel $pr={14}>Number</GroupLabel>
					<LauncherIcon />
				</Group>

				<Group $w={194}>
					<GroupBody $pl={10}>
						<LargeButton $w={70}>
							<LargeIcon>
								<ConditionalIcon />
							</LargeIcon>
							<LargeLine>Conditional</LargeLine>
							<LargeLine>
								Formatting <Chev />
							</LargeLine>
						</LargeButton>
						<LargeButton $w={62}>
							<LargeIcon>
								<TableStyleIcon />
							</LargeIcon>
							<LargeLine>Format as</LargeLine>
							<LargeLine>
								Table <Chev />
							</LargeLine>
						</LargeButton>
						<LargeButton $w={44}>
							<LargeIcon>
								<TableStyleIcon wide />
							</LargeIcon>
							<LargeLine>Cell</LargeLine>
							<LargeLine>
								Styles <Chev />
							</LargeLine>
						</LargeButton>
					</GroupBody>
					<GroupLabel>Styles</GroupLabel>
				</Group>

				<Group $w={143}>
					<GroupBody $pl={8}>
						<LargeButton $w={40}>
							<LargeIcon>
								<InsertIcon />
							</LargeIcon>
							<LargeLine>Insert</LargeLine>
							<LargeLine>
								<Chev />
							</LargeLine>
						</LargeButton>
						<LargeButton $w={44}>
							<LargeIcon>
								<DeleteIcon />
							</LargeIcon>
							<LargeLine>Delete</LargeLine>
							<LargeLine>
								<Chev />
							</LargeLine>
						</LargeButton>
						<LargeButton $w={42}>
							<LargeIcon>
								<FormatIcon />
							</LargeIcon>
							<LargeLine>Format</LargeLine>
							<LargeLine>
								<Chev />
							</LargeLine>
						</LargeButton>
					</GroupBody>
					<GroupLabel>Cells</GroupLabel>
				</Group>

				<Group $w={143}>
					<GroupBody $pl={10}>
						<SmallStack $w={33}>
							<SmallRow $gap={6}>
								<SigmaIcon />
								<Chev />
							</SmallRow>
							<SmallRow>
								<FillDownIcon />
								<Chev />
							</SmallRow>
							<SmallRow>
								<EraserIcon />
								<Chev />
							</SmallRow>
						</SmallStack>
						<LargeButton $w={46}>
							<LargeIcon>
								<SortIcon />
							</LargeIcon>
							<LargeLine>Sort &amp;</LargeLine>
							<LargeLine>
								Filter <Chev />
							</LargeLine>
						</LargeButton>
						<LargeButton $w={44}>
							<LargeIcon>
								<FindIcon />
							</LargeIcon>
							<LargeLine>Find &amp;</LargeLine>
							<LargeLine>
								Select <Chev />
							</LargeLine>
						</LargeButton>
					</GroupBody>
					<GroupLabel>Editing</GroupLabel>
				</Group>

				<Group $w={63}>
					<GroupBody>
						<LargeButton $w={62}>
							<LargeIcon>
								<Dot $s={10} />
							</LargeIcon>
							<LargeLine>Add-ins</LargeLine>
						</LargeButton>
					</GroupBody>
					<GroupLabel>Add-ins</GroupLabel>
				</Group>

				<CollapseRibbon width="10" height="6" viewBox="0 0 10 6" fill="none">
					<path d="M.5 5.500L5 1l4.500 4.500" stroke="#444" />
				</CollapseRibbon>
			</Ribbon>

			<FormulaArea>
				<NameBox>
					A3
					<Caret color="#777" />
				</NameBox>
				<FormulaGrip>
					<Svg w={2} h={12}>
						<path d="M1 0v12" stroke="#aaa" strokeWidth="2" strokeDasharray="2 3" />
					</Svg>
				</FormulaGrip>
				<FxBox>
					<Slot $w={12} $h={12} $ml={12}>
						<CrossIcon s={11} color="#c3c3c3" width={1.5} />
					</Slot>
					<Slot $w={13} $h={13} $ml={24}>
						<Check size={15} strokeWidth={2} color="#c3c3c3" />
					</Slot>
					<Slot $w={13} $h={16} $ml={23} $italic $serif $fs={14}>
						fx
					</Slot>
				</FxBox>
				<FormulaInput>
					Row Labels
					<Chev />
				</FormulaInput>
			</FormulaArea>

			<Main>
				<SheetColumn>
					<SheetArea>
						<SheetGrid />
						<VScroll>
							<ScrollTrack>
								<ScrollButton>
									<Arrow dir="up" />
								</ScrollButton>
								<ScrollThumb $h={86} $m="2px 0 0" />
								<ScrollGap />
								<ScrollButton>
									<Arrow dir="down" />
								</ScrollButton>
							</ScrollTrack>
						</VScroll>
					</SheetArea>
					<SheetTabs>
						<TabNav>
							<Arrow dir="left" color="#c3c3c3" />
							<Arrow dir="right" color="#c3c3c3" />
						</TabNav>
						<SheetTab $active $w={66}>
							Sheet1
						</SheetTab>
						<SheetTab $w={90}>encounters</SheetTab>
						<TabDivider />
						<AddSheet>
							<Svg w={16} h={16}>
								<circle cx="8" cy="8" r="7.300" stroke="#8a8a8a" strokeWidth="1.200" />
								<path d="M8 4v8M4 8h8" stroke="#777" strokeWidth="1.500" />
							</Svg>
						</AddSheet>
						<TabGrip>
							<Svg w={2} h={12}>
								<path d="M1 0v12" stroke="#aaa" strokeWidth="2" strokeDasharray="2 3" />
							</Svg>
						</TabGrip>
						<HScroll>
							<ScrollButton $w={15} $h={14}>
								<Arrow dir="left" />
							</ScrollButton>
							<ScrollThumb $w={310} />
							<ScrollGap />
							<ScrollButton $w={16} $h={14}>
								<Arrow dir="right" />
							</ScrollButton>
						</HScroll>
					</SheetTabs>
				</SheetColumn>
				<FieldPanel />
			</Main>

			<StatusBar>
				<StatusText $ml={11}>Ready</StatusText>
				<Slot $w={13} $h={13} $ml={21}>
					<Svg w={13} h={13}>
						<circle cx="2.500" cy="2.500" r="2.500" fill="#555" />
						<path d="M5 .5h8v12H.5V6M2.500 7.500h9M2.500 9.500h9M4.500 5.500v6M7 5.500v6M9.500 5.500v6" stroke="#555" />
					</Svg>
				</Slot>
				<Slot $w={16} $h={15} $ml={17}>
					<Svg w={16} h={15}>
						<path d="M10 1.800A6 6 0 1011 12" stroke="#666" strokeWidth="1.200" />
						<path d="M5 3l2 4h3M8 6l6 7M14 6l-6 7" stroke="#444" strokeWidth="1.300" />
					</Svg>
				</Slot>
				<StatusText $ml={4} $bold $fs={10.7}>
					Accessibility: Investigate
				</StatusText>
				<StatusRight>
					<ViewButton $active>
						<Svg w={14} h={14}>
							<path d="M.5.5h13v13H.5zM.5 4.800h13M.5 9.200h13M4.800 0v14M9.200 0v14" stroke="#777" />
						</Svg>
					</ViewButton>
					<ViewButton>
						<Svg w={12} h={14}>
							<path d="M.5.5h11v13H.5z" stroke="#555" />
							<path d="M3 4h6v7H3zM3 6.500h6M3 9h6" stroke="#666" />
						</Svg>
					</ViewButton>
					<ViewButton>
						<Svg w={14} h={12}>
							<path d="M.5.5h13v11H.5zM5 0v7h4V0" stroke="#555" />
						</Svg>
					</ViewButton>
					<ZoomMark $w={7} $ml={6}>
						−
					</ZoomMark>
					<ZoomSlider>
						<ZoomThumb />
					</ZoomSlider>
					<ZoomMark $w={10} $ml={4}>
						+
					</ZoomMark>
					<StatusText $ml={13}>100%</StatusText>
				</StatusRight>
			</StatusBar>

			<DesktopStrip>
				<BehindWindow>
					<BehindMark $w={2} $color="#e0443e" />
					<BehindMark $w={8} $color="#2f85d8" />
				</BehindWindow>
				<BehindClock>20:11</BehindClock>
				<BehindEdge />
			</DesktopStrip>
		</Page>
	);
}
